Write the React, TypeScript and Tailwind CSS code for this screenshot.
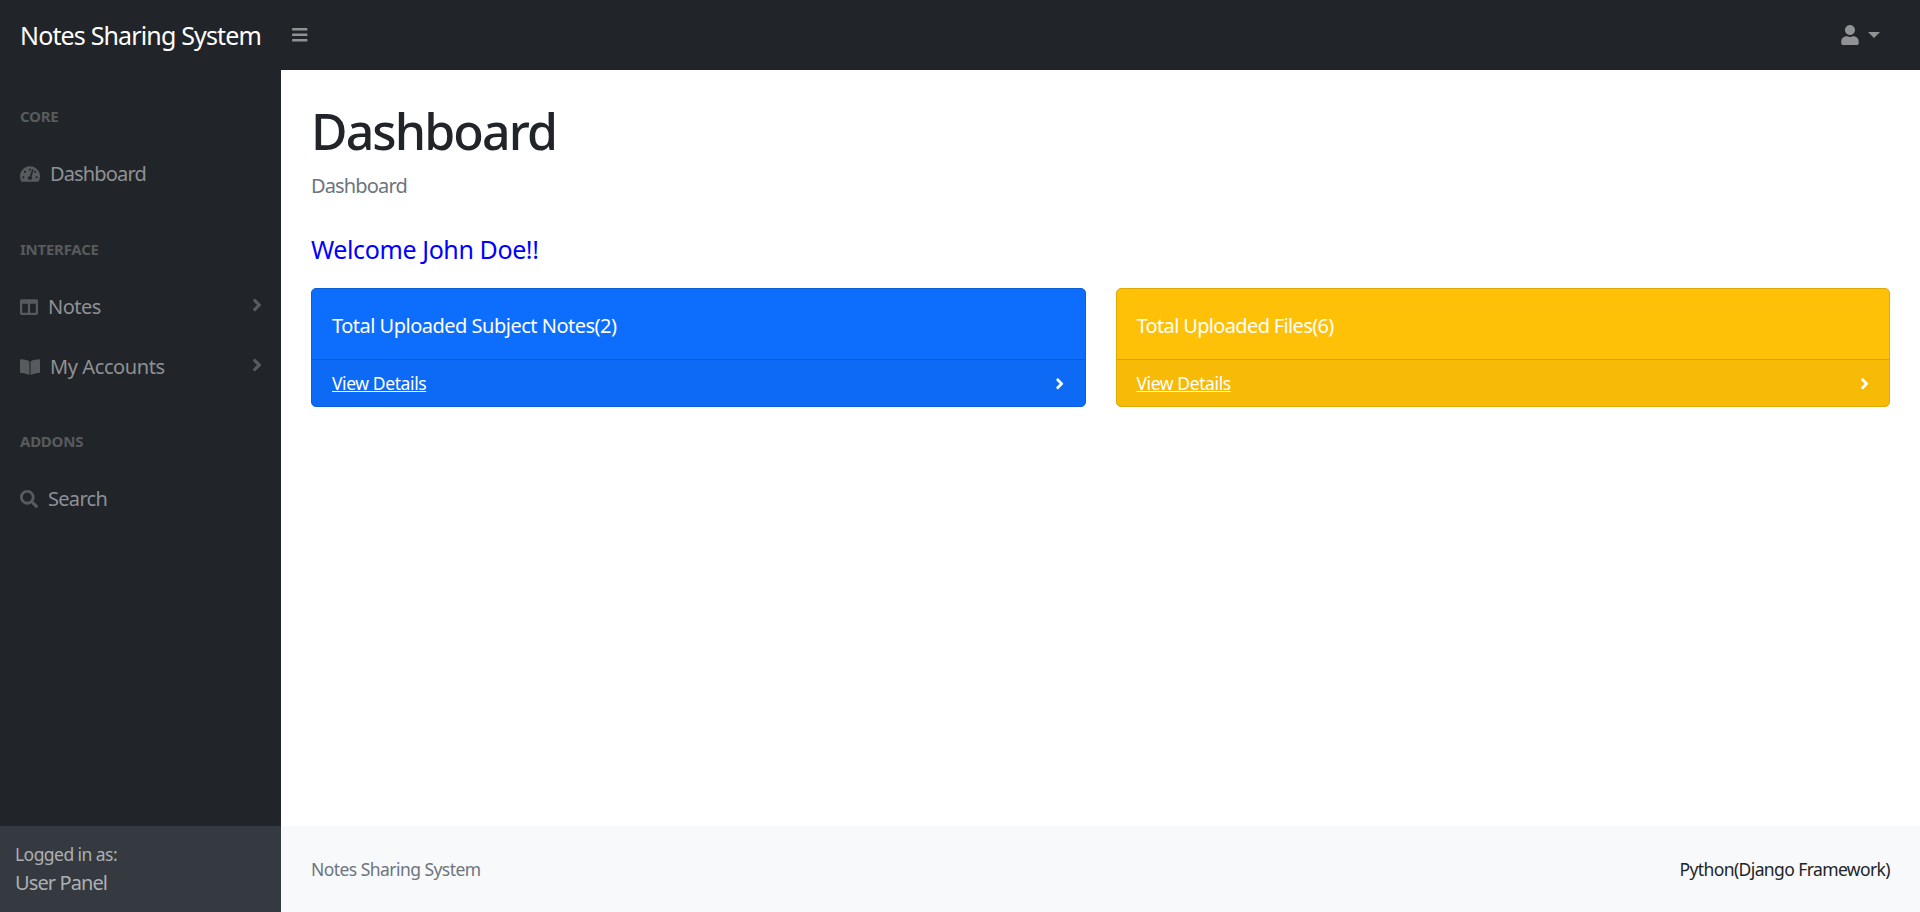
// Admin dashboard page: top bar, side navigation, summary cards and footer
import type { ReactNode } from 'react';
import { FaAngleRight, FaBars, FaBookOpen, FaColumns, FaSearch, FaTachometerAlt, FaUser } from 'react-icons/fa';

function SideHeading({ children }: { children: ReactNode }) {
  return (
    <div className="px-5 pt-[35px] pb-[15px] text-[15px] leading-[22.5px] font-bold text-[#585b5e] uppercase tracking-[-0.25px]">
      {children}
    </div>
  );
}

function SideLink({ icon, label, labelClass, arrow }: { icon: ReactNode; label: string; labelClass: string; arrow?: boolean }) {
  return (
    <div className="flex items-center h-[60px] pt-[3px] pl-5 pr-[14px] text-[20px] text-[#8f9194]">
      <span className="mr-[10px] text-[#585b5e]">{icon}</span>
      <span className={labelClass}>{label}</span>
      {arrow && (
        <span className="ml-auto text-[#585b5e] text-[20px] -translate-y-[2px]">
          <FaAngleRight />
        </span>
      )}
    </div>
  );
}

function StatCard({ title, titleClass, tone }: { title: string; titleClass: string; tone: 'blue' | 'yellow' }) {
  const bg = tone === 'blue' ? 'bg-[#0d6efd] border-[#0b5ed7]' : 'bg-[#ffc107] border-[#dfa906]';
  return (
    <div className={`flex-1 rounded-[5px] border text-white ${bg}`}>
      <div className={`h-[70px] pt-[3px] flex items-center px-5 text-[20px] ${titleClass}`}>{title}</div>
      <div className="h-[47px] pt-[1px] flex items-center justify-between pl-5 pr-[16px] border-t border-black/[.125] bg-black/[.03]">
        <a className="text-[17.5px] underline tracking-[-0.4px]">View Details</a>
        <FaAngleRight className="text-[17.5px]" />
      </div>
    </div>
  );
}

export default function App() {
  return (
    <div className="h-[912px] flex flex-col overflow-hidden bg-white font-['Noto_Sans',sans-serif]">
      <header className="h-[70px] shrink-0 flex items-center bg-[#212529]">
        <div className="w-[281px] pl-5 pt-[2px] text-[25px] text-white tracking-[-0.85px]">Notes Sharing System</div>
        <FaBars className="ml-[10px] text-[17.5px] text-[#909294]" />
        <div className="ml-auto mr-[40px] flex items-center gap-[8px] text-[#909294]">
          <FaUser className="text-[20px]" />
          <span className="mt-[-1px] border-x-[6px] border-t-[6px] border-x-transparent border-t-[#909294]" />
        </div>
      </header>
      <div className="flex-1 flex min-h-0">
        <aside className="w-[281px] shrink-0 flex flex-col bg-[#212529]">
          <nav className="flex-1">
            <SideHeading>Core</SideHeading>
            <SideLink icon={<FaTachometerAlt className="w-5 h-5" />} label="Dashboard" labelClass="tracking-[-0.85px]" />
            <SideHeading>Interface</SideHeading>
            <SideLink icon={<FaColumns className="w-[18px] h-[18px]" />} label="Notes" labelClass="tracking-[-0.5px]" arrow />
            <SideLink icon={<FaBookOpen className="w-5 h-5" />} label="My Accounts" labelClass="tracking-[-0.4px]" arrow />
            <SideHeading>Addons</SideHeading>
            <SideLink icon={<FaSearch className="w-[18px] h-[18px]" />} label="Search" labelClass="tracking-[-0.7px]" />
          </nav>
          <div className="h-[86px] px-[15px] flex flex-col justify-center bg-[#343a40] text-[#adb0b3]">
            <div className="text-[17.5px] leading-[26px] tracking-[-0.55px]">Logged in as:</div>
            <div className="text-[20px] leading-[30px] pt-[1px] tracking-[-0.9px]">User Panel</div>
          </div>
        </aside>
        <div className="flex-1 flex flex-col min-w-0">
          <main className="flex-1 px-[30px] pt-[31px]">
            <h1 className="text-[50px] leading-[60px] font-medium text-[#212529] tracking-[-1.9px]">Dashboard</h1>
            <div className="mt-[10px] text-[20px] leading-[30px] text-[#6c757d] tracking-[-0.85px]">Dashboard</div>
            <div className="mt-[30px] text-[25px] leading-[36px] text-[#0000ff] tracking-[-0.4px]">Welcome John Doe!!</div>
            <div className="mt-[21px] flex gap-[30px]">
              <StatCard title="Total Uploaded Subject Notes(2)" titleClass="tracking-[-0.5px]" tone="blue" />
              <StatCard title="Total Uploaded Files(6)" titleClass="tracking-[-0.65px]" tone="yellow" />
            </div>
          </main>
          <footer className="h-[86px] shrink-0 px-[30px] flex items-center justify-between bg-[#f8f9fa] text-[17.5px]">
            <span className="text-[#6c757d] tracking-[-0.55px]">Notes Sharing System</span>
            <span className="text-[#212529] tracking-[-0.6px]">Python(Django Framework)</span>
          </footer>
        </div>
      </div>
    </div>
  );
}
